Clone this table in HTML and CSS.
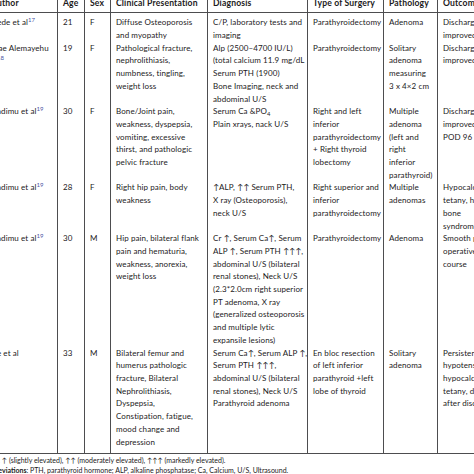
FILE: index.html
```html
<!DOCTYPE html>
<html lang="en">
<head>
<meta charset="utf-8">
<title>Case summary table</title>
<link rel="stylesheet" href="styles.css">
</head>
<body>
<div class="wrap">
  <table class="cases">
    <colgroup>
      <col class="c-author">
      <col class="c-age">
      <col class="c-sex">
      <col class="c-clin">
      <col class="c-diag">
      <col class="c-surg">
      <col class="c-path">
      <col class="c-out">
    </colgroup>
    <thead>
      <tr>
        <th>Author</th>
        <th>Age</th>
        <th>Sex</th>
        <th>Clinical Presentation</th>
        <th>Diagnosis</th>
        <th>Type of Surgery</th>
        <th>Pathology</th>
        <th>Outcome</th>
      </tr>
    </thead>
    <tbody>
      <tr class="first">
        <td>Dede et al<span class="ref">17</span></td>
        <td>21</td>
        <td>F</td>
        <td>Diffuse Osteoporosis<br>and myopathy</td>
        <td>C/P, laboratory tests and<br>imaging</td>
        <td>Parathyroidectomy</td>
        <td>Adenoma</td>
        <td>Discharged<br>improved</td>
      </tr>
      <tr>
        <td>Mae Alemayehu<br>al<span class="ref">18</span></td>
        <td>19</td>
        <td>F</td>
        <td>Pathological fracture,<br>nephrolithiasis,<br>numbness, tingling,<br>weight loss</td>
        <td>Alp (2500–4700 IU/L)<br>(total calcium 11.9 mg/dL<br>Serum PTH (1900)<br>Bone Imaging, neck and<br>abdominal U/S</td>
        <td>Parathyroidectomy</td>
        <td>Solitary<br>adenoma<br>measuring<br>3 x 4×2 cm</td>
        <td>Discharged<br>improved</td>
      </tr>
      <tr>
        <td>Andimu et al<span class="ref">19</span></td>
        <td>30</td>
        <td>F</td>
        <td>Bone/Joint pain,<br>weakness, dyspepsia,<br>vomiting, excessive<br>thirst, and pathologic<br>pelvic fracture</td>
        <td>Serum Ca &amp;PO<span class="sub">4</span><br>Plain xrays, nack U/S</td>
        <td>Right and left<br>inferior<br>parathyroidectomy<br>+ Right thyroid<br>lobectomy</td>
        <td>Multiple<br>adenoma<br>(left and<br>right<br>inferior<br>parathyroid)</td>
        <td>Discharged<br>improved on<br>POD 96</td>
      </tr>
      <tr>
        <td>Andimu et al<span class="ref">19</span></td>
        <td>28</td>
        <td>F</td>
        <td>Right hip pain, body<br>weakness</td>
        <td>↑ALP, ↑↑ Serum PTH,<br>X ray (Osteoporosis),<br>neck U/S</td>
        <td>Right superior and<br>inferior<br>parathyroidectomy</td>
        <td>Multiple<br>adenomas</td>
        <td>Hypocalcemia,<br>tetany, hungry<br>bone<br>syndrome–</td>
      </tr>
      <tr>
        <td>Andimu et al<span class="ref">19</span></td>
        <td>30</td>
        <td>M</td>
        <td>Hip pain, bilateral flank<br>pain and hematuria,<br>weakness, anorexia,<br>weight loss</td>
        <td>Cr ↑, Serum Ca↑, Serum<br>ALP ↑, Serum PTH ↑↑↑,<br>abdominal U/S (bilateral<br>renal stones), Neck U/S<br>(2.3*2.0cm right superior<br>PT adenoma, X ray<br>(generalized osteoporosis<br>and multiple lytic<br>expansile lesions)</td>
        <td>Parathyroidectomy</td>
        <td>Adenoma</td>
        <td>Smooth post<br>operative<br>course</td>
      </tr>
      <tr class="last">
        <td>Ge et al</td>
        <td>33</td>
        <td>M</td>
        <td>Bilateral femur and<br>humerus pathologic<br>fracture, Bilateral<br>Nephrolithiasis,<br>Dyspepsia,<br>Constipation, fatigue,<br>mood change and<br>depression</td>
        <td>Serum Ca↑, Serum ALP ↑,<br>Serum PTH ↑↑↑,<br>abdominal U/S (bilateral<br>renal stones), Neck U/S<br>Parathyroid adenoma</td>
        <td>En bloc resection<br>of left inferior<br>parathyroid +left<br>lobe of thyroid</td>
        <td>Solitary<br>adenoma</td>
        <td>Persistent<br>hypotension,<br>hypocalcemia,<br>tetany, death<br>after discharge</td>
      </tr>
    </tbody>
  </table>
  <div class="notes">
    <p>Note: ↑ (slightly elevated), ↑↑ (moderately elevated), ↑↑↑ (markedly elevated).</p>
    <p><b>Abbreviations</b>: PTH, parathyroid hormone; ALP, alkaline phosphatase; Ca, Calcium, U/S, Ultrasound.</p>
  </div>
</div>
</body>
</html>
```
FILE: styles.css
```css
html, body {
  margin: 0;
  padding: 0;
  background: #ffffff;
  overflow: hidden;
}

body {
  font-family: Lato, "Open Sans", sans-serif;
  color: #1c1a1b;
}

.wrap {
  margin: -6px 0 0 -14px;
}

.cases {
  table-layout: fixed;
  width: 552px;
  border-collapse: separate;
  border-spacing: 0;
  font-size: 8px;
  letter-spacing: 0.1px;
  line-height: 12.7px;
}

.c-author { width: 72px; }
.c-age { width: 27px; }
.c-sex { width: 26px; }
.c-clin { width: 97px; }
.c-diag { width: 100px; }
.c-surg { width: 76px; }
.c-path { width: 54px; }
.c-out { width: 100px; }

.cases th,
.cases td {
  box-sizing: border-box;
  padding: 0 0 0 5px;
  text-align: left;
  vertical-align: top;
  white-space: nowrap;
  overflow: visible;
  border-right: 1px solid #4d4d4f;
}

.cases th {
  font-size: 8.6px;
  font-weight: 700;
  letter-spacing: 0.15px;
  padding-top: 3.3px;
  padding-bottom: 2px;
  border-bottom: 1px solid #4d4d4f;
}

.cases tr.first td {
  padding-top: 3.3px;
}

.cases tr.last td {
  padding-bottom: 4.4px;
  border-bottom: 1px solid #4d4d4f;
}

.ref {
  font-size: 6px;
  letter-spacing: 0;
  line-height: 0;
  vertical-align: 3px;
  color: #4a55a2;
}

.sub {
  font-size: 5.8px;
  line-height: 0;
  vertical-align: -1.5px;
}

.notes {
  margin: 1px 0 0 -3px;
  font-size: 7px;
  line-height: 10.3px;
  white-space: nowrap;
}

.notes p {
  margin: 0;
}
```
